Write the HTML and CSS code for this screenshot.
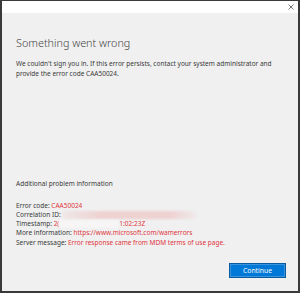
FILE: index.html
```html
<!DOCTYPE html>
<html>
<head>
<meta charset="utf-8">
<link rel="stylesheet" href="styles.css">
</head>
<body>
<div class="window">
  <div class="titlebar">
    <svg class="close" width="6" height="6" viewBox="0 0 6 6"><path d="M0.5 0.5 L5.5 5.5 M5.5 0.5 L0.5 5.5" stroke="#7a7a7a" stroke-width="1"/></svg>
  </div>
  <div class="content">
    <h1 class="title">Something went wrong</h1>
    <p class="message">We couldn't sign you in. If this error persists, contact your system administrator and provide the error code CAA50024.</p>
    <div class="spacer"></div>
    <p class="section">Additional problem information</p>
    <div class="details">
      <div class="row">Error code: <span class="red">CAA50024</span></div>
      <div class="row">Correlation ID: <span class="blur blur-pink"></span></div>
      <div class="row">Timestamp: <span class="red">2(</span><span class="blur blur-white"></span><span class="red">1:02:23Z</span></div>
      <div class="row">More information: <span class="red">https://www.microsoft.com/wamerrors</span></div>
      <div class="row">Server message: <span class="red">Error response came from MDM terms of use page.</span></div>
    </div>
    <div class="actions">
      <button class="btn">Continue</button>
    </div>
  </div>
</div>
</body>
</html>
```
FILE: styles.css
```css
html, body {
  margin: 0;
  padding: 0;
  background: #ffffff;
}
.window {
  width: 300px;
  height: 293px;
  box-sizing: border-box;
  border-top: 1px solid #3a3a3a;
  border-left: 2px solid #3a3a3a;
  border-right: 2px solid #3a3a3a;
  border-bottom: 2px solid #3a3a3a;
  display: flex;
  flex-direction: column;
  font-family: "Noto Sans", "Open Sans", sans-serif;
  color: #3a3a3a;
}
.titlebar {
  height: 12px;
  background: #fff;
  display: flex;
  justify-content: flex-end;
  align-items: flex-start;
  padding: 3px 4px 0 0;
  box-sizing: border-box;
}
.close { display: block; }
.content {
  flex: 1;
  background: #f0f0f0;
  padding: 0 12px 0 14px;
  display: flex;
  flex-direction: column;
}
.title {
  margin: 23px 0 0 0;
  font-size: 10.8px;
  font-weight: 300;
  color: #444;
  line-height: 14px;
}
.message {
  margin: 9px 0 0 0;
  font-size: 6.5px;
  line-height: 9.5px;
}
.spacer { flex: 1; }
.section {
  margin: 0;
  font-size: 6.5px;
  line-height: 9px;
}
.details {
  margin-top: 13px;
  font-size: 6.5px;
  line-height: 9.3px;
}
.row { white-space: nowrap; }
.red { color: #e0353d; }
.blur {
  display: inline-block;
  vertical-align: middle;
  height: 8px;
}
.blur-pink {
  width: 135px;
  background: linear-gradient(90deg, rgba(240,200,200,0.2), rgba(238,205,205,0.9) 30%, rgba(238,205,205,0.9) 80%, rgba(240,220,220,0.2));
  border-radius: 4px;
  filter: blur(1px);
}
.blur-white {
  width: 60px;
  background: #f7f5f5;
  filter: blur(1px);
}
.actions {
  display: flex;
  justify-content: flex-end;
  margin-top: 16px;
  margin-bottom: 13px;
}
.btn {
  width: 57px;
  height: 15px;
  background: #0078d7;
  border: 1px solid #0a5aa0;
  box-shadow: inset 0 0 0 1px #3b93dd;
  color: #fff;
  font-family: "Noto Sans", sans-serif;
  font-size: 6.8px;
  padding: 0;
}
```
